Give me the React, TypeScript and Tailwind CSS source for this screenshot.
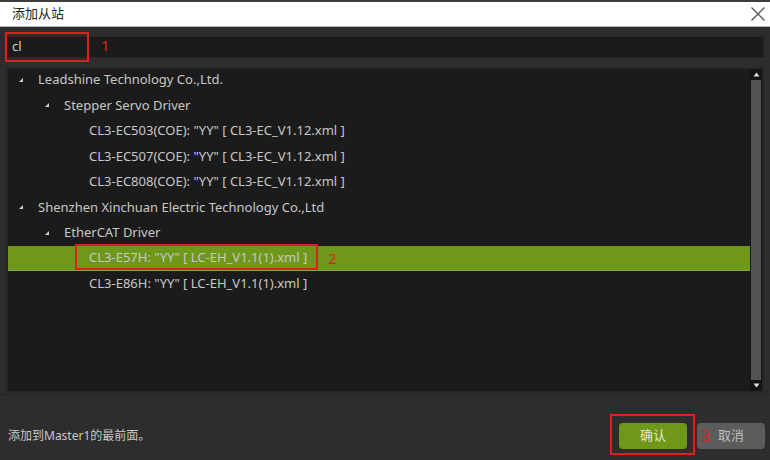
import React from 'react';

const FONT = { fontFamily: '"Noto Sans", "Noto Sans CJK SC", sans-serif' };

type Row = { level: number; text: string; expanded?: boolean; selected?: boolean };

const ROWS: Row[] = [
  { level: 0, text: 'Leadshine Technology Co.,Ltd.', expanded: true },
  { level: 1, text: 'Stepper Servo Driver', expanded: true },
  { level: 2, text: 'CL3-EC503(COE): "YY" [ CL3-EC_V1.12.xml ]' },
  { level: 2, text: 'CL3-EC507(COE): "YY" [ CL3-EC_V1.12.xml ]' },
  { level: 2, text: 'CL3-EC808(COE): "YY" [ CL3-EC_V1.12.xml ]' },
  { level: 0, text: 'Shenzhen Xinchuan Electric Technology Co.,Ltd', expanded: true },
  { level: 1, text: 'EtherCAT Driver', expanded: true },
  { level: 2, text: 'CL3-E57H: "YY" [ LC-EH_V1.1(1).xml ]', selected: true },
  { level: 2, text: 'CL3-E86H: "YY" [ LC-EH_V1.1(1).xml ]' },
];

const Expander = () => (
  <svg width="6" height="6" viewBox="0 0 6 6" className="shrink-0">
    <polygon points="5,1 5,5 1,5" fill="#d0d0d0" />
  </svg>
);

const TreeRow: React.FC<{ row: Row }> = ({ row }) => {
  const pad = row.level === 0 ? 'pl-[10px]' : row.level === 1 ? 'pl-[36px]' : 'pl-[81px]';
  return (
    <div
      className={`relative flex items-center h-[25.5px] ${pad} ${
        row.selected ? 'bg-[#6f9719] border-b border-[#8aa84a]' : ''
      }`}
    >
      {row.expanded ? (
        <>
          <Expander />
          <span className="ml-[14px] text-[13px] text-[#c8c8c8] whitespace-nowrap">{row.text}</span>
        </>
      ) : (
        <span className="text-[13px] text-[#c8c8c8] whitespace-nowrap">{row.text}</span>
      )}
      {row.selected && (
        <>
          <div className="absolute left-[67px] top-[-2px] w-[243px] h-[26px] border-2 border-[#e0201c]" />
          <span className="absolute left-[320px] top-[1px] text-[15px] text-[#e0201c]">2</span>
        </>
      )}
    </div>
  );
};

export default function App() {
  return (
    <div className="w-[770px] h-[460px] bg-[#2d2d2d] flex flex-col overflow-hidden" style={FONT}>
      <div className="h-[2px] bg-[#3e3e3e]" />
      {/* title bar */}
      <div className="h-[25px] bg-white border-b border-[#b8b8b8] flex items-center justify-between pl-[12px] pr-[4px]">
        <span className="text-[13px] text-[#222]">添加从站</span>
        <svg width="16" height="16" viewBox="0 0 16 16">
          <path d="M1.5 1.5 L14.5 14.5 M14.5 1.5 L1.5 14.5" stroke="#555" strokeWidth="1.3" fill="none" />
        </svg>
      </div>

      <div className="px-[6px] pt-[9px]">
        {/* search */}
        <div className="relative h-[22px] bg-[#1b1b1b] border border-[#262626] flex items-center pl-[5px]">
          <span className="text-[13px] text-[#d0d0d0]">cl</span>
          <div className="absolute left-[-2px] top-[-5px] w-[84px] h-[30px] border-2 border-[#e0201c]" />
          <span className="absolute left-[94px] top-[-3px] text-[15px] text-[#e0201c]">1</span>
        </div>

        {/* tree */}
        <div className="mt-[9px] h-[326px] bg-[#1b1b1b] border-2 border-[#262626] flex">
          <div className="flex-1 mt-[-2px]">
            {ROWS.map((r, i) => (
              <TreeRow key={i} row={r} />
            ))}
          </div>
          <div className="w-[12px] bg-[#141414] flex flex-col items-center">
            <div className="h-[11px] flex items-center justify-center">
              <svg width="7" height="5" viewBox="0 0 7 5">
                <polygon points="3.5,0.5 6.5,4.5 0.5,4.5" fill="#e0e0e0" />
              </svg>
            </div>
            <div className="flex-1 w-[10px] bg-[#545454]" />
            <div className="h-[11px] flex items-center justify-center">
              <svg width="7" height="5" viewBox="0 0 7 5">
                <polygon points="0.5,0.5 6.5,0.5 3.5,4.5" fill="#e0e0e0" />
              </svg>
            </div>
          </div>
        </div>
      </div>

      {/* footer */}
      <div className="border-t border-[#262626] mt-[1px] flex-1 flex items-center justify-between pl-[8px] pr-[5px]">
        <span className="text-[12px] text-[#c8c8c8] mt-[16px]">添加到Master1的最前面。</span>
        <div className="flex items-center mt-[16px]">
          <div className="relative">
            <div className="absolute left-[-9px] top-[-8px] w-[85px] h-[41px] border-2 border-[#e0201c]" />
            <button className="w-[68px] h-[26px] rounded-[4px] bg-[#6f9719] text-[13px] text-[#e0e8d0]">确认</button>
          </div>
          <button className="relative ml-[10px] w-[68px] h-[26px] rounded-[4px] bg-[#5c5c5c] text-[13px] text-[#bdbdbd]">
            取消
            <span className="absolute left-[4px] top-[1px] text-[16px] text-[#e0201c]">3</span>
          </button>
        </div>
      </div>
    </div>
  );
}
